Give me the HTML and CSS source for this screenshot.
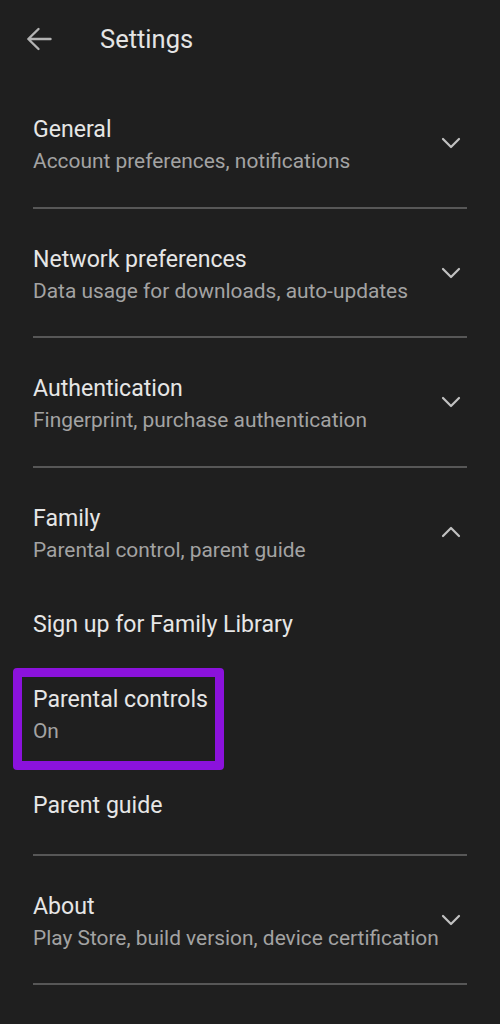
FILE: index.html
```html
<!DOCTYPE html>
<html>
<head>
<meta charset="utf-8">
<link rel="stylesheet" href="styles.css">
</head>
<body>
<div class="screen">
  <header class="topbar">
    <svg class="back" width="26" height="24" viewBox="0 0 26 24"><path d="M24.5 12H2.5M12.5 2L2.3 12l10.2 10" fill="none" stroke="#b3b3b3" stroke-width="2.4" stroke-linecap="round" stroke-linejoin="round"/></svg>
    <h1 class="title">Settings</h1>
  </header>
  <section class="group">
    <div class="row">
      <div class="texts"><div class="primary">General</div><div class="secondary">Account preferences, notifications</div></div>
      <svg class="chev" width="20" height="12" viewBox="0 0 20 12"><polyline points="2,2 10,10 18,2" fill="none" stroke="#c2c2c2" stroke-width="2.2" stroke-linecap="round" stroke-linejoin="round"/></svg>
    </div>
  </section>
  <section class="group">
    <div class="row">
      <div class="texts"><div class="primary">Network preferences</div><div class="secondary">Data usage for downloads, auto-updates</div></div>
      <svg class="chev" width="20" height="12" viewBox="0 0 20 12"><polyline points="2,2 10,10 18,2" fill="none" stroke="#c2c2c2" stroke-width="2.2" stroke-linecap="round" stroke-linejoin="round"/></svg>
    </div>
  </section>
  <section class="group">
    <div class="row">
      <div class="texts"><div class="primary">Authentication</div><div class="secondary">Fingerprint, purchase authentication</div></div>
      <svg class="chev" width="20" height="12" viewBox="0 0 20 12"><polyline points="2,2 10,10 18,2" fill="none" stroke="#c2c2c2" stroke-width="2.2" stroke-linecap="round" stroke-linejoin="round"/></svg>
    </div>
  </section>
  <section class="group expanded">
    <div class="row">
      <div class="texts"><div class="primary">Family</div><div class="secondary">Parental control, parent guide</div></div>
      <svg class="chev" width="20" height="12" viewBox="0 0 20 12"><polyline points="2,10 10,2 18,10" fill="none" stroke="#c2c2c2" stroke-width="2.2" stroke-linecap="round" stroke-linejoin="round"/></svg>
    </div>
    <div class="subitems">
      <div class="sub"><div class="primary">Sign up for Family Library</div></div>
      <div class="sub highlighted"><div class="primary">Parental controls</div><div class="secondary">On</div></div>
      <div class="sub"><div class="primary">Parent guide</div></div>
    </div>
  </section>
  <section class="group">
    <div class="row">
      <div class="texts"><div class="primary">About</div><div class="secondary">Play Store, build version, device certification</div></div>
      <svg class="chev" width="20" height="12" viewBox="0 0 20 12"><polyline points="2,2 10,10 18,2" fill="none" stroke="#c2c2c2" stroke-width="2.2" stroke-linecap="round" stroke-linejoin="round"/></svg>
    </div>
  </section>
</div>
</body>
</html>
```

FILE: styles.css
```css
html, body {
  margin: 0;
  padding: 0;
  background: #1f1f1f;
}
body {
  font-family: Roboto, "Noto Sans", sans-serif;
  width: 500px;
  height: 1024px;
  overflow: hidden;
}
.screen {
  display: flex;
  flex-direction: column;
  padding: 0 33px;
}
.topbar {
  height: 79px;
  display: flex;
  align-items: center;
  margin-left: -7px;
  padding-bottom: 2px;
  box-sizing: border-box;
}
.back {
  display: block;
  flex: none;
}
.title {
  margin: 0 0 0 48px;
  font-size: 25.5px;
  font-weight: 400;
  color: #e4e4e4;
  line-height: 30px;
}
.group {
  padding: 36px 0 29.6px;
  border-bottom: 2px solid #575757;
}
.row {
  display: flex;
  align-items: center;
}
.texts {
  flex: 1;
}
.primary {
  font-size: 23.1px;
  line-height: 30px;
  color: #e6e6e6;
}
.secondary {
  font-size: 20.9px;
  line-height: 32px;
  color: #a3a3a3;
}
.chev {
  flex: none;
  margin-right: 6px;
  margin-bottom: 6px;
  display: block;
}
.subitems {
  display: flex;
  flex-direction: column;
  gap: 44.5px;
  padding-top: 44.5px;
  padding-bottom: 3px;
}
.sub {
  position: relative;
}
.highlighted::after {
  content: "";
  position: absolute;
  left: -20px;
  top: -17px;
  width: 211px;
  height: 102px;
  box-sizing: border-box;
  border: 9px solid #8b12dc;
  border-radius: 4px;
}
```
